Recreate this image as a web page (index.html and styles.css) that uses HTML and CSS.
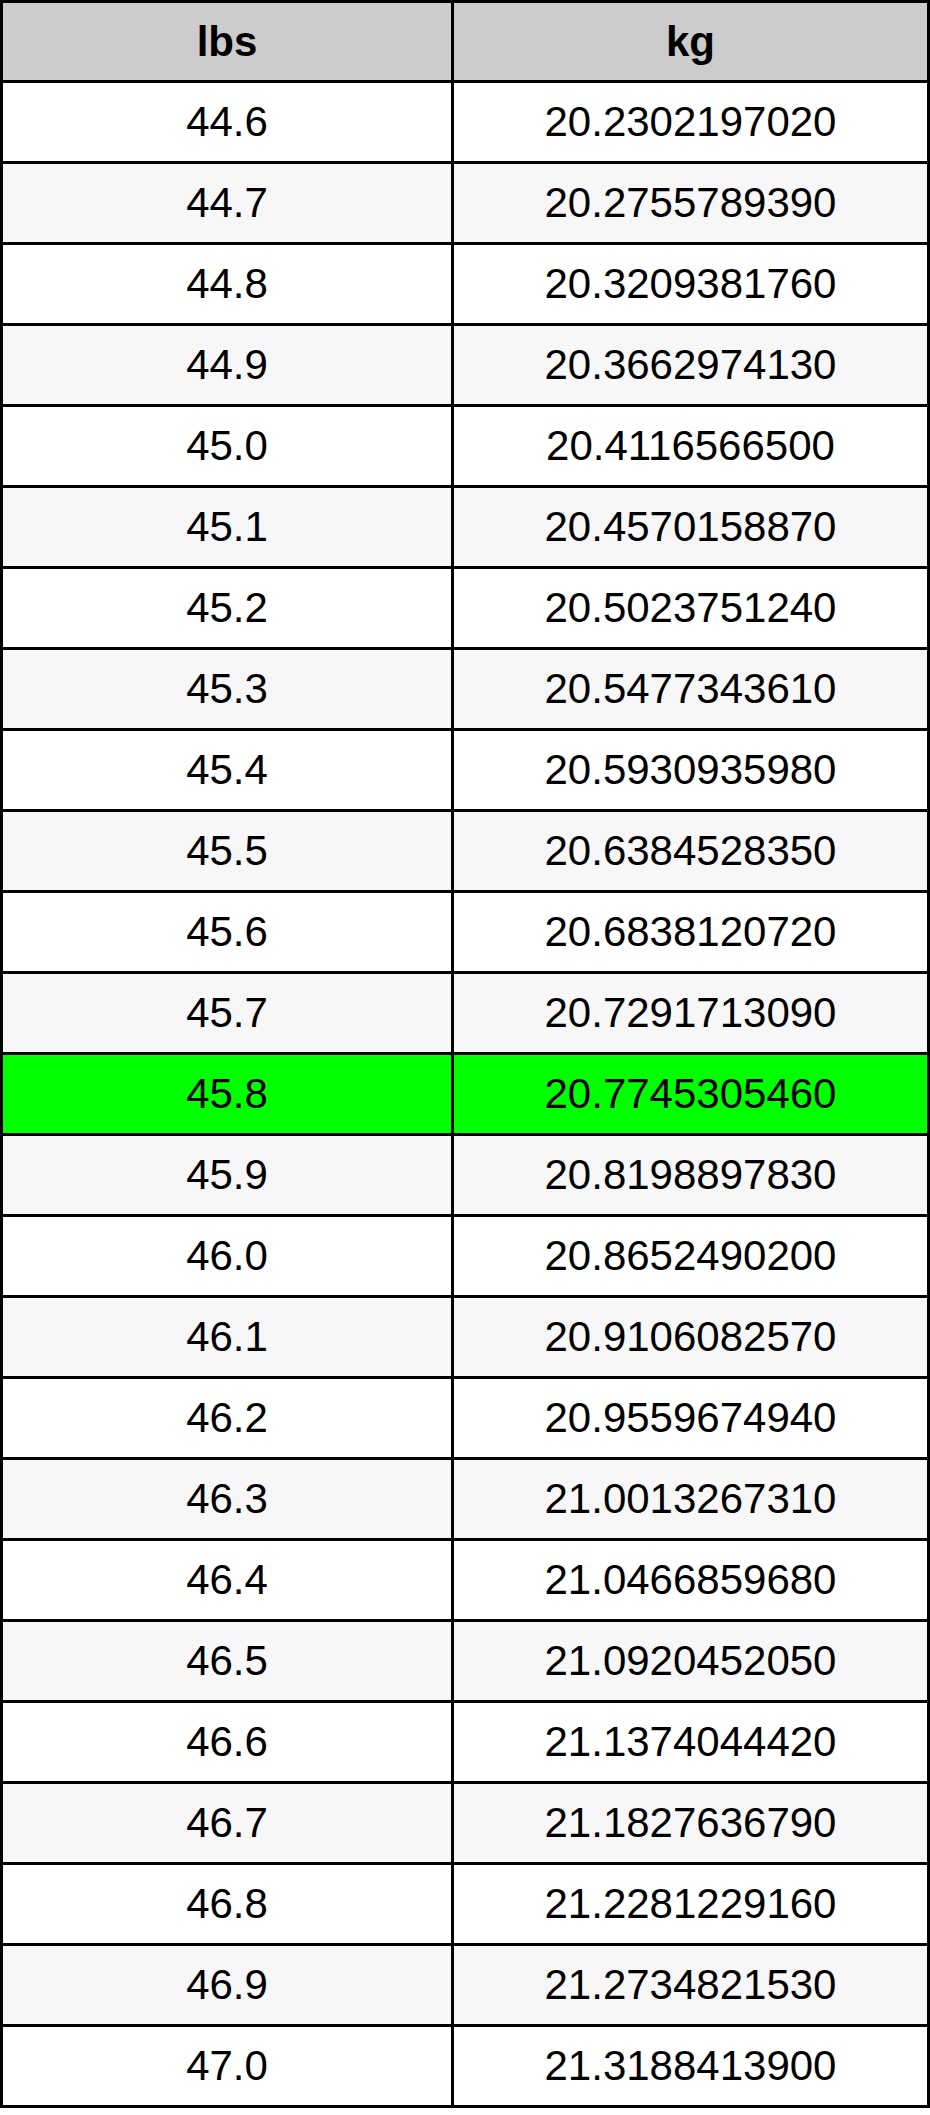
FILE: index.html
```html
<!DOCTYPE html>
<html>
<head>
<meta charset="utf-8">
<link rel="stylesheet" href="styles.css">
</head>
<body>
<table class="conv">
<thead>
<tr class="head"><th class="c1">lbs</th><th class="c2">kg</th></tr>
</thead>
<tbody>
<tr><td>44.6</td><td>20.2302197020</td></tr>
<tr class="alt"><td>44.7</td><td>20.2755789390</td></tr>
<tr><td>44.8</td><td>20.3209381760</td></tr>
<tr class="alt"><td>44.9</td><td>20.3662974130</td></tr>
<tr><td>45.0</td><td>20.4116566500</td></tr>
<tr class="alt"><td>45.1</td><td>20.4570158870</td></tr>
<tr><td>45.2</td><td>20.5023751240</td></tr>
<tr class="alt"><td>45.3</td><td>20.5477343610</td></tr>
<tr><td>45.4</td><td>20.5930935980</td></tr>
<tr class="alt"><td>45.5</td><td>20.6384528350</td></tr>
<tr><td>45.6</td><td>20.6838120720</td></tr>
<tr class="alt"><td>45.7</td><td>20.7291713090</td></tr>
<tr class="hl"><td>45.8</td><td>20.7745305460</td></tr>
<tr class="alt"><td>45.9</td><td>20.8198897830</td></tr>
<tr><td>46.0</td><td>20.8652490200</td></tr>
<tr class="alt"><td>46.1</td><td>20.9106082570</td></tr>
<tr><td>46.2</td><td>20.9559674940</td></tr>
<tr class="alt"><td>46.3</td><td>21.0013267310</td></tr>
<tr><td>46.4</td><td>21.0466859680</td></tr>
<tr class="alt"><td>46.5</td><td>21.0920452050</td></tr>
<tr><td>46.6</td><td>21.1374044420</td></tr>
<tr class="alt"><td>46.7</td><td>21.1827636790</td></tr>
<tr><td>46.8</td><td>21.2281229160</td></tr>
<tr class="alt"><td>46.9</td><td>21.2734821530</td></tr>
<tr><td>47.0</td><td>21.3188413900</td></tr>
</tbody>
</table>
</body>
</html>
```

FILE: styles.css
```css
html, body {
  margin: 0;
  padding: 0;
  background: #ffffff;
}

.conv {
  border-collapse: separate;
  border-spacing: 0;
  border-top: 3px solid #000;
  border-left: 3px solid #000;
  table-layout: fixed;
  width: 930px;
  font-family: "Liberation Sans", Arial, sans-serif;
  font-size: 42px;
  color: #000;
}

.conv th,
.conv td {
  padding: 0;
  border-right: 3px solid #000;
  border-bottom: 3px solid #000;
  text-align: center;
  vertical-align: middle;
  line-height: 1;
}

.conv th {
  background: #cccccc;
  font-weight: bold;
}

.conv .c1 {
  width: 448px;
}

.conv .head {
  height: 80px;
}

.conv tbody tr {
  height: 81px;
  background: #ffffff;
}

.conv tbody tr.alt {
  background: #f7f7f7;
}

.conv tbody tr.hl {
  background: #00ff00;
}
```
